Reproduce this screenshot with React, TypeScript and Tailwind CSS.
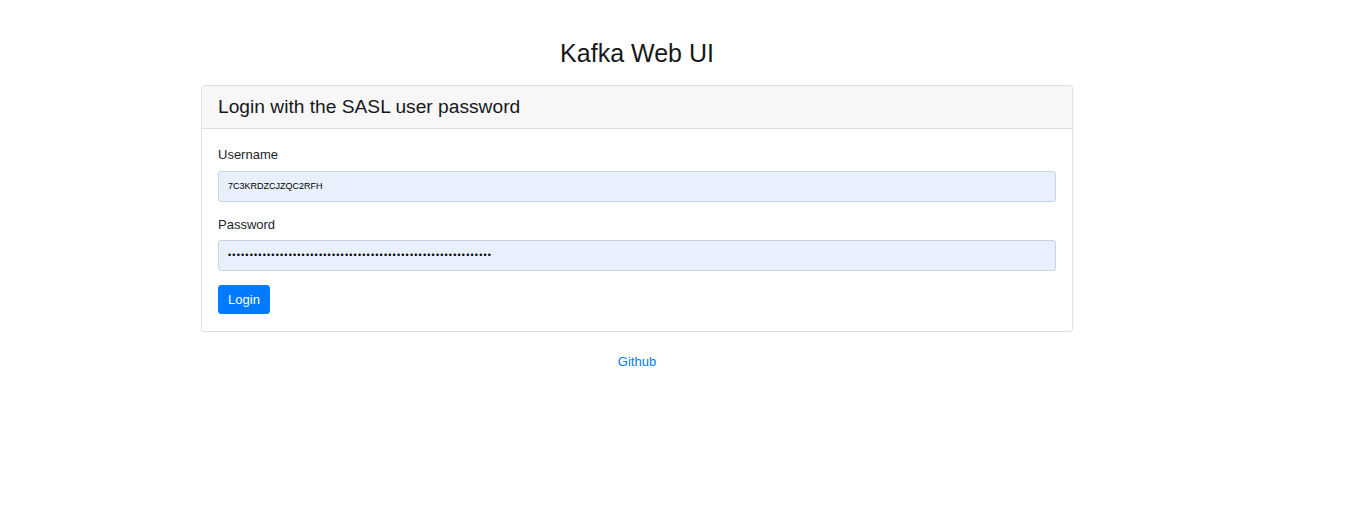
export default function App() {
  const dots = "•".repeat(61);

  return (
    <div className="min-h-[513px] bg-white text-[#212529]" style={{ fontFamily: '"Liberation Sans", Arial, sans-serif' }}>
      <div className="w-[1274px] flex flex-col items-center pt-[38px]">
        <h1 className="text-[25px] leading-[30px] font-normal text-[#16181b]">Kafka Web UI</h1>
        <div className="mt-[17px] w-[872px] rounded-[3px] border border-[#e0e0e0]">
          <div className="h-[43px] flex items-center px-[16px] bg-[#f7f7f7] border-b border-[#e0e0e0] rounded-t-[3px]">
            <h5 className="text-[19.2px] leading-[24px] font-normal text-[#16181b]">Login with the SASL user password</h5>
          </div>
          <div className="px-[16px] pt-[16px] pb-[17px] flex flex-col">
            <label className="text-[13px] leading-[20px]">Username</label>
            <div className="mt-[6px] h-[31px] rounded-[3px] border border-[#c8d3e3] bg-[#e8f0fe] flex items-center px-[9px] text-[9px] text-black">
              7C3KRDZCJZQC2RFH
            </div>
            <label className="mt-[13px] text-[13px] leading-[20px]">Password</label>
            <div className="mt-[5px] h-[31px] rounded-[3px] border border-[#c8d3e3] bg-[#e8f0fe] flex items-center px-[9px] text-[9px] text-black tracking-[1.18px] overflow-hidden whitespace-nowrap">
              {dots}
            </div>
            <div className="mt-[14px]">
              <button className="h-[29px] w-[52px] rounded-[3px] bg-[#007bff] border border-[#007bff] text-white text-[13px] leading-none">
                Login
              </button>
            </div>
          </div>
        </div>
        <a className="mt-[20px] text-[13px] leading-[20px] text-[#007bff]">Github</a>
      </div>
    </div>
  );
}
